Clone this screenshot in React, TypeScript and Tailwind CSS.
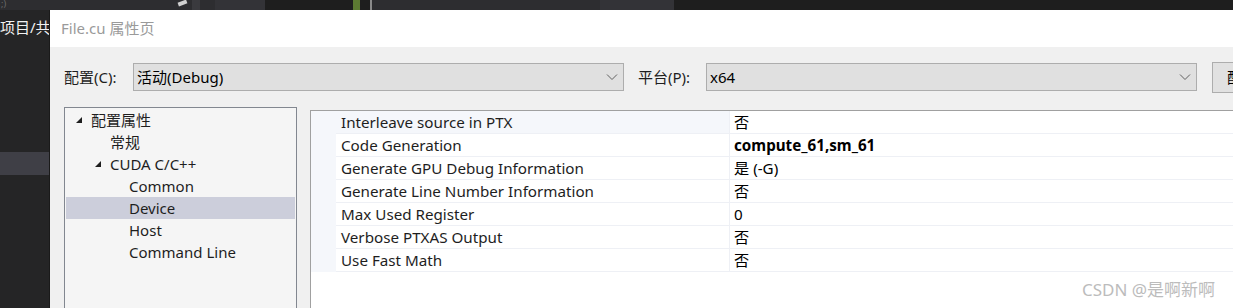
import React from "react";

const F = { fontFamily: '"Noto Sans", "Noto Sans CJK SC", sans-serif' };

function Tri() {
  return (
    <svg width="8" height="8" viewBox="0 0 8 8" className="shrink-0">
      <path d="M7 1 L7 7 L1 7 Z" fill="#1e1e1e" />
    </svg>
  );
}

function Chevron() {
  return (
    <svg width="12" height="8" viewBox="0 0 12 8" className="shrink-0">
      <path d="M1 1.5 L6 6.5 L11 1.5" fill="none" stroke="#606060" strokeWidth="1" />
    </svg>
  );
}

const rows: [string, string, boolean?][] = [
  ["Interleave source in PTX", "否"],
  ["Code Generation", "compute_61,sm_61", true],
  ["Generate GPU Debug Information", "是 (-G)"],
  ["Generate Line Number Information", "否"],
  ["Max Used Register", "0"],
  ["Verbose PTXAS Output", "否"],
  ["Use Fast Math", "否"],
];

export default function App() {
  return (
    <div className="w-[1233px] h-[308px] overflow-hidden bg-[#252526] flex flex-col" style={F}>
      {/* top strip */}
      <div className="h-[10px] flex shrink-0 bg-[#2d2d30]">
        <div className="w-[178px] h-full bg-[#2d2d30] flex items-start">
          <span className="text-[9px] leading-[8px] text-[#6a6a6a] ml-[1px]">;)</span>
        </div>
        <div className="w-[14px] h-full flex items-start">
          <div className="w-[9px] h-[4px] mt-[1px] bg-[#d0d0d0] rotate-[-20deg]" />
        </div>
        <div className="w-[8px] h-full bg-[#3a3a3e]" />
        <div className="w-[15px] h-full bg-[#2d2d30]" />
        <div className="w-[50px] h-full bg-[#333337]" />
        <div className="w-[88px] h-full bg-[#1e1e1e]" />
        <div className="w-[7px] h-full bg-[#5c7a32]" />
        <div className="w-[10px] h-full bg-[#1e1e1e]" />
        <div className="w-[2px] h-full bg-[#8a8a8a]" />
        <div className="w-[228px] h-full bg-[#2d2d30]" />
        <div className="w-[74px] h-full bg-[#333337]" />
        <div className="flex-1 h-full bg-[#1e1e1e]" />
      </div>
      <div className="flex flex-1 min-h-0">
        {/* left dark panel */}
        <div className="w-[50px] shrink-0 flex flex-col bg-[#252526] border-r border-[#1a1a1a] overflow-hidden">
          <div className="h-[27px] flex items-end overflow-hidden">
            <span className="text-[15px] text-[#f1f1f1] whitespace-nowrap leading-[20px]">项目/共</span>
          </div>
          <div className="h-[115px]" />
          <div className="h-[23px] bg-[#3f3f46]" />
        </div>
        {/* dialog */}
        <div className="flex-1 flex flex-col bg-[#f0f0f0] min-w-0 overflow-hidden">
          <div className="h-[37px] bg-white flex items-center pl-[11px] shrink-0">
            <span className="text-[15px] text-[#9a9a9a] leading-none">File.cu 属性页</span>
          </div>
          <div className="flex items-center h-[30px] mt-[15px] pl-[14px] shrink-0">
            <span className="text-[15px] text-[#1e1e1e] w-[69px] shrink-0">配置(C):</span>
            <div className="w-[491px] shrink-0 h-[28px] bg-[#e0e0e0] border border-[#adadad] flex items-center justify-between pl-[3px] pr-[5px]">
              <span className="text-[15px] text-[#000]">活动(Debug)</span>
              <Chevron />
            </div>
            <span className="text-[15px] text-[#1e1e1e] ml-[14px] w-[68px] shrink-0">平台(P):</span>
            <div className="w-[491px] shrink-0 h-[28px] bg-[#e0e0e0] border border-[#adadad] flex items-center justify-between pl-[3px] pr-[5px]">
              <span className="text-[15px] text-[#000]">x64</span>
              <Chevron />
            </div>
            <div className="ml-[15px] w-[40px] shrink-0 h-[31px] bg-[#e1e1e1] border border-[#adadad] flex items-center pl-[14px] overflow-hidden">
              <span className="text-[15px] text-[#000] whitespace-nowrap">配置</span>
            </div>
          </div>
          <div className="flex flex-1 min-h-0 mt-[15px] pl-[14px]">
            {/* tree */}
            <div className="w-[233px] shrink-0 bg-[#f5f5f5] border border-[#828790] border-b-0 pt-[1px] pl-[1px] pr-[1px] text-[15px] text-[#1e1e1e]">
              <div className="h-[22px] flex items-center pl-[9px] gap-[8px]"><Tri /><span>配置属性</span></div>
              <div className="h-[22px] flex items-center pl-[44px]"><span>常规</span></div>
              <div className="h-[22px] flex items-center pl-[28px] gap-[8px]"><Tri /><span>CUDA C/C++</span></div>
              <div className="h-[22px] flex items-center pl-[63px]"><span>Common</span></div>
              <div className="h-[22px] flex items-center pl-[63px] bg-[#cccedb]"><span>Device</span></div>
              <div className="h-[22px] flex items-center pl-[63px]"><span>Host</span></div>
              <div className="h-[22px] flex items-center pl-[63px]"><span>Command Line</span></div>
            </div>
            {/* grid */}
            <div className="flex-1 ml-[13px] mt-[3px] bg-white border-l border-t border-[#a0a0a0] relative min-w-0">
              <div className="flex flex-col text-[15.2px] text-[#1e1e1e]">
                {rows.map(([n, v, b], i) => (
                  <div key={n} className="flex h-[23px]">
                    <div className="w-[25px] shrink-0 bg-[#f5f7fb]" />
                    <div className={`w-[393px] shrink-0 flex items-center pl-[5px] border-b border-[#eef0f5] ${i === 0 ? "bg-[#f5f7fb]" : "bg-white"}`}>
                      <span className="whitespace-nowrap">{n}</span>
                    </div>
                    <div className="w-px bg-[#eef0f5] shrink-0" />
                    <div className="flex-1 flex items-center pl-[4px] border-b border-[#eef0f5]">
                      <span className={`whitespace-nowrap text-[#000] ${b ? "font-bold" : ""}`}>{v}</span>
                    </div>
                  </div>
                ))}
              </div>
              <div className="absolute left-[771px] top-[166px] text-[17px] text-[#bcbcbc] whitespace-nowrap">CSDN @是啊新啊</div>
            </div>
          </div>
        </div>
      </div>
    </div>
  );
}
